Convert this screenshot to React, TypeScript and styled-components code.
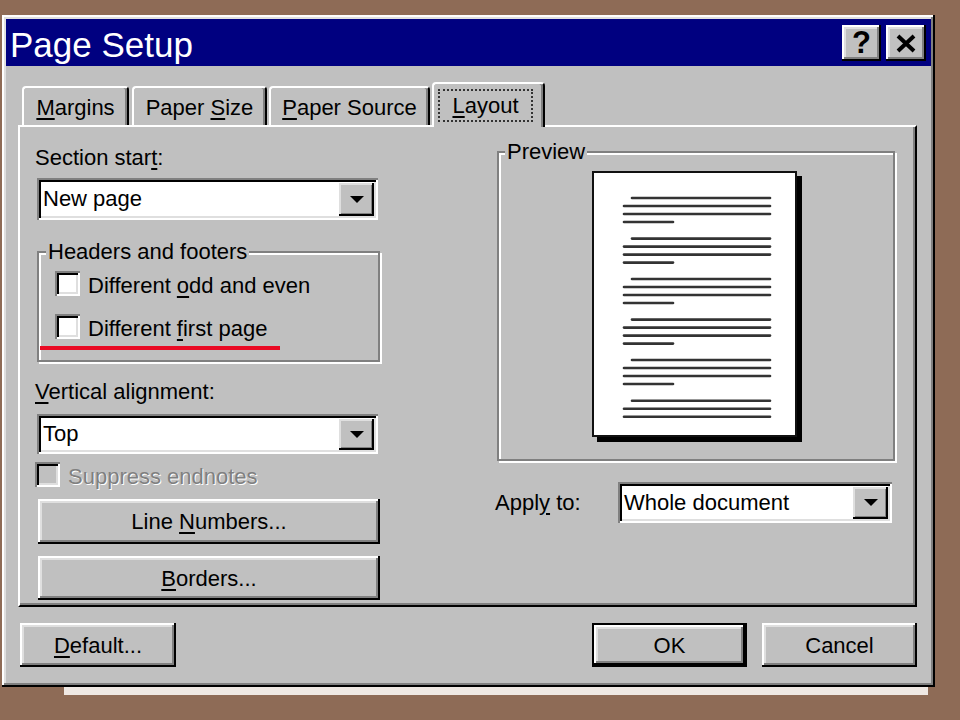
import styled, { createGlobalStyle } from 'styled-components';

const raised = `
  box-shadow: inset -2px -2px 0 #000, inset 2px 2px 0 #fff,
    inset -4px -4px 0 #808080, inset 4px 4px 0 #dfdfdf;
`;

const sunken = `
  box-shadow: inset 2px 2px 0 #808080, inset -2px -2px 0 #fff,
    inset 4px 4px 0 #000, inset -4px -4px 0 #dfdfdf;
`;

const GlobalStyle = createGlobalStyle`
  html, body {
    margin: 0;
    padding: 0;
    background: #8e6b56;
  }
  body {
    font-family: "Liberation Sans", Arial, sans-serif;
    font-size: 22px;
    color: #000;
  }
  * {
    box-sizing: border-box;
  }
`;

const Page = styled.div`
  width: 960px;
  height: 720px;
  padding: 15px 0 0 2px;
  overflow: hidden;
`;

const Dialog = styled.div`
  width: 933px;
  height: 672px;
  padding: 4px;
  background: #c0c0c0;
  display: flex;
  flex-direction: column;
  ${raised}
`;

const TitleBar = styled.div`
  height: 47px;
  background: #000080;
  display: flex;
  align-items: center;
  padding: 0 5px 0 4px;
`;

const Title = styled.div`
  flex: 1;
  color: #fff;
  font-size: 35px;
  line-height: 43px;
  padding-top: 4px;
  align-self: flex-start;
`;

const CaptionButton = styled.div<{ $gap?: number }>`
  width: ${({ $gap }) => ($gap ? 40 : 39)}px;
  height: 36px;
  margin-left: ${({ $gap }) => $gap ?? 0}px;
  background: #c0c0c0;
  display: flex;
  align-items: center;
  justify-content: center;
  font-weight: bold;
  font-size: 31px;
  line-height: 36px;
  padding-top: 1px;
  ${raised}
`;

const Body = styled.div`
  flex: 1;
  padding: 0 14px 0 12px;
  display: flex;
  flex-direction: column;
`;

const TabRow = styled.div`
  margin-top: 16px;
  height: 43px;
  padding-left: 4px;
  display: flex;
  align-items: flex-end;
`;

const Tab = styled.div<{ $width: number; $active?: boolean; $gap?: number }>`
  position: relative;
  z-index: ${({ $active }) => ($active ? 2 : 0)};
  width: ${({ $width }) => $width}px;
  height: ${({ $active }) => ($active ? 45 : 39)}px;
  margin-right: ${({ $gap }) => $gap ?? 0}px;
  margin-bottom: ${({ $active }) => ($active ? -2 : 0)}px;
  background: #c0c0c0;
  border-top: 2px solid #fff;
  border-left: 2px solid #fff;
  border-right: 2px solid #000;
  border-radius: 4px 4px 0 0;
  box-shadow: inset -2px 0 0 #808080;
  padding: ${({ $active }) => ($active ? '5px 0 0 4px' : '3px 0 0 0')};
  text-align: center;
  line-height: 34px;
`;

const FocusRing = styled.div`
  width: 95px;
  height: 33px;
  border: 2px dotted #333;
  line-height: 29px;
  text-align: center;
`;

const Panel = styled.div`
  height: 482px;
  background: #c0c0c0;
  border-top: 2px solid #fff;
  border-left: 2px solid #fff;
  border-right: 2px solid #000;
  border-bottom: 2px solid #000;
  box-shadow: inset -2px -2px 0 #808080;
  padding: 13px 0 0 15px;
  display: grid;
  grid-template-columns: 345px 400px;
  column-gap: 115px;
  align-items: start;
`;

const Column = styled.div`
  display: flex;
  flex-direction: column;
  align-items: flex-start;
`;

const Label = styled.div<{ $top?: number }>`
  margin-top: ${({ $top }) => $top ?? 0}px;
  line-height: 26px;
  white-space: nowrap;
`;

const Key = styled.span`
  text-decoration: underline;
  text-decoration-thickness: 2px;
  text-underline-offset: 3px;
`;

const Select = styled.div<{ $width: number; $height: number; $top?: number }>`
  width: ${({ $width }) => $width}px;
  height: ${({ $height }) => $height}px;
  margin: ${({ $top }) => $top ?? 0}px 0 0 2px;
  background: #fff;
  display: flex;
  align-items: center;
  padding: 0 4px 0 6px;
  ${sunken}
`;

const SelectValue = styled.span`
  flex: 1;
  line-height: 26px;
  white-space: nowrap;
`;

const DropButton = styled.div`
  width: 35px;
  height: calc(100% - 9px);
  background: #c0c0c0;
  display: flex;
  align-items: center;
  justify-content: center;
  box-shadow: inset -2px -2px 0 #000, inset 2px 2px 0 #dfdfdf,
    inset -3px -3px 0 #808080;
`;

const Arrow = styled.span`
  width: 0;
  height: 0;
  border-left: 7px solid transparent;
  border-right: 7px solid transparent;
  border-top: 7px solid #000;
`;

const Group = styled.fieldset<{ $width: number; $height?: number; $top?: number }>`
  width: ${({ $width }) => $width}px;
  height: ${({ $height }) => ($height ? `${$height}px` : 'auto')};
  margin: ${({ $top }) => $top ?? 0}px 0 0 2px;
  padding: 0;
  min-inline-size: 0;
  border: 2px solid #808080;
  box-shadow: inset 2px 2px 0 #fff, 2px 2px 0 #fff;
`;

const Legend = styled.legend<{ $indent: number }>`
  margin-left: ${({ $indent }) => $indent}px;
  padding: 0 2px;
  background: #c0c0c0;
  line-height: 24px;
`;

const GroupContent = styled.div`
  display: flex;
  flex-direction: column;
  gap: 16px;
  padding: 7px 0 0 16px;
`;

const CheckRow = styled.div<{ $top?: number }>`
  display: flex;
  align-items: flex-start;
  gap: 8px;
  margin-top: ${({ $top }) => $top ?? 0}px;
`;

const CheckBox = styled.span<{ $disabled?: boolean }>`
  width: 25px;
  height: 25px;
  flex-shrink: 0;
  background: ${({ $disabled }) => ($disabled ? '#c0c0c0' : '#fff')};
  ${sunken}
`;

const CheckText = styled.span<{ $disabled?: boolean }>`
  line-height: 25px;
  padding-top: 2px;
  white-space: nowrap;
  color: ${({ $disabled }) => ($disabled ? '#808080' : '#000')};
  text-shadow: ${({ $disabled }) => ($disabled ? '1px 1px 0 #fff' : 'none')};
`;

const RedMark = styled.div`
  width: 240px;
  height: 4px;
  margin: -11px 0 10px -15px;
  background: #ea0a24;
`;

const Button = styled.div<{ $width: number; $height?: number; $top?: number; $left?: number; $default?: boolean }>`
  width: ${({ $width }) => $width}px;
  height: ${({ $height }) => $height ?? 44}px;
  margin-top: ${({ $top }) => $top ?? 0}px;
  margin-left: ${({ $left }) => $left ?? 0}px;
  background: #c0c0c0;
  display: flex;
  align-items: center;
  justify-content: center;
  line-height: 26px;
  padding-top: 1px;
  white-space: nowrap;
  border: ${({ $default }) => ($default ? '2px solid #000' : 'none')};
  ${raised}
`;

const PreviewArea = styled.div`
  display: flex;
  justify-content: center;
  padding: 7px 4px 0 0;
`;

const Sheet = styled.div`
  width: 205px;
  height: 266px;
  background: #fff;
  border: 2px solid #111;
  box-shadow: 5px 5px 0 #000;
`;

const ApplyRow = styled.div`
  margin-top: 21px;
  display: flex;
  align-items: center;
  width: 100%;
`;

const ApplyLabel = styled.div`
  width: 121px;
  line-height: 26px;
  white-space: nowrap;
`;

const Footer = styled.div`
  margin-top: 16px;
  display: flex;
  align-items: center;
`;

const Spacer = styled.div`
  flex: 1;
`;

const BottomStrip = styled.div`
  width: 864px;
  height: 8px;
  margin-left: 62px;
  background: #efe8e3;
`;

function SelectBox({ value, width, height, top }: { value: string; width: number; height: number; top?: number }) {
  return (
    <Select $width={width} $height={height} $top={top}>
      <SelectValue>{value}</SelectValue>
      <DropButton>
        <Arrow />
      </DropButton>
    </Select>
  );
}

function PagePreview() {
  const paragraphs = [25, 65.6, 106, 146.6, 187, 227.7];
  return (
    <Sheet>
      <svg width="201" height="262" viewBox="-2 -2 201 262">
        {paragraphs.map((y, i) => {
          const last = i === paragraphs.length - 1;
          const rows = [
            [38, 176],
            [30, 176],
            [30, 176],
            [30, 79],
          ].slice(0, last ? 3 : 4);
          return rows.map(([x1, x2], j) => (
            <line
              key={`${i}-${j}`}
              x1={x1 - 2}
              x2={x2 - 2}
              y1={y + j * 8 - 2}
              y2={y + j * 8 - 2}
              stroke="#333"
              strokeWidth="2.6"
              strokeLinecap="round"
            />
          ));
        })}
      </svg>
    </Sheet>
  );
}

export default function App() {
  return (
    <>
      <GlobalStyle />
      <Page>
        <Dialog>
          <TitleBar>
            <Title>Page Setup</Title>
            <CaptionButton>?</CaptionButton>
            <CaptionButton $gap={5}>
              <svg width="20" height="19" viewBox="0 0 20 19">
                <path d="M2 2 L18 17 M18 2 L2 17" stroke="#000" strokeWidth="4" />
              </svg>
            </CaptionButton>
          </TitleBar>

          <Body>
            <TabRow>
              <Tab $width={107} $gap={3}>
                <Key>M</Key>argins
              </Tab>
              <Tab $width={135} $gap={2}>
                Paper <Key>S</Key>ize
              </Tab>
              <Tab $width={161} $gap={2}>
                <Key>P</Key>aper Source
              </Tab>
              <Tab $width={113} $active>
                <FocusRing>
                  <Key>L</Key>ayout
                </FocusRing>
              </Tab>
            </TabRow>

            <Panel>
              <Column>
                <Label $top={5}>
                  Section star<Key>t</Key>:
                </Label>
                <SelectBox value="New page" width={341} height={42} top={7} />

                <Group $width={343} $top={20}>
                  <Legend $indent={7}>Headers and footers</Legend>
                  <GroupContent>
                    <CheckRow>
                      <CheckBox />
                      <CheckText>
                        Different <Key>o</Key>dd and even
                      </CheckText>
                    </CheckRow>
                    <CheckRow>
                      <CheckBox />
                      <CheckText>
                        Different <Key>f</Key>irst page
                      </CheckText>
                    </CheckRow>
                    <RedMark />
                  </GroupContent>
                </Group>

                <Label $top={17}>
                  <Key>V</Key>ertical alignment:
                </Label>
                <SelectBox value="Top" width={341} height={40} top={9} />

                <CheckRow $top={8}>
                  <CheckBox $disabled />
                  <CheckText $disabled>Suppress endnotes</CheckText>
                </CheckRow>

                <Button $width={342} $height={45} $top={10} $left={3}>
                  <span>
                    Line <Key>N</Key>umbers...
                  </span>
                </Button>
                <Button $width={342} $top={12} $left={3}>
                  <span>
                    <Key>B</Key>orders...
                  </span>
                </Button>
              </Column>

              <Column>
                <Group $width={398} $height={321}>
                  <Legend $indent={6}>Preview</Legend>
                  <PreviewArea>
                    <PagePreview />
                  </PreviewArea>
                </Group>
                <ApplyRow>
                  <ApplyLabel>
                    Appl<Key>y</Key> to:
                  </ApplyLabel>
                  <SelectBox value="Whole document" width={274} height={41} />
                </ApplyRow>
              </Column>
            </Panel>

            <Footer>
              <Button $width={156} $left={2}>
                <span>
                  <Key>D</Key>efault...
                </span>
              </Button>
              <Spacer />
              <Button $width={155} $default>
                OK
              </Button>
              <Button $width={155} $left={15}>
                Cancel
              </Button>
            </Footer>
          </Body>
        </Dialog>
        <BottomStrip />
      </Page>
    </>
  );
}
